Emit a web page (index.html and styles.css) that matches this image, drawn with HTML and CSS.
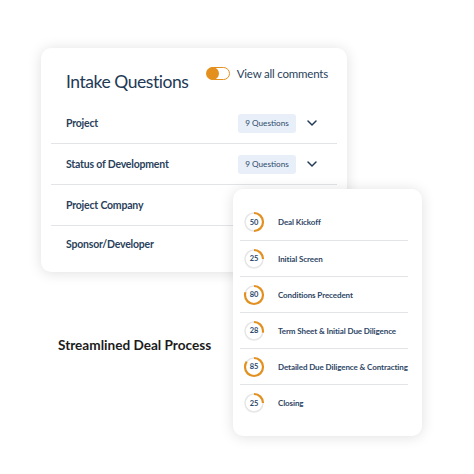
FILE: index.html
```html
<!DOCTYPE html>
<html lang="en">
<head>
<meta charset="utf-8">
<title>Intake Questions</title>
<link rel="stylesheet" href="styles.css">
</head>
<body>
<div class="stage">
  <section class="card intake">
    <header class="intake-head">
      <h1 class="intake-title">Intake Questions</h1>
      <div class="comments-toggle">
        <span class="toggle"><span class="toggle-knob"></span></span>
        <span class="toggle-label">View all comments</span>
      </div>
    </header>
    <ul class="q-list">
      <li class="q-row">
        <span class="q-name">Project</span>
        <span class="q-meta"><span class="badge">9 Questions</span>
          <svg class="chev" width="10" height="6" viewBox="0 0 10 6"><path d="M1 1l4 4 4-4" fill="none" stroke="#243b58" stroke-width="1.5" stroke-linecap="round" stroke-linejoin="round"/></svg></span>
      </li>
      <li class="q-row">
        <span class="q-name">Status of Development</span>
        <span class="q-meta"><span class="badge">9 Questions</span>
          <svg class="chev" width="10" height="6" viewBox="0 0 10 6"><path d="M1 1l4 4 4-4" fill="none" stroke="#243b58" stroke-width="1.5" stroke-linecap="round" stroke-linejoin="round"/></svg></span>
      </li>
      <li class="q-row">
        <span class="q-name">Project Company</span>
      </li>
      <li class="q-row">
        <span class="q-name">Sponsor/Developer</span>
      </li>
    </ul>
  </section>

  <p class="caption">Streamlined Deal Process</p>

  <section class="card deal">
    <ul class="stage-list">
      <li class="stage-row">
        <span class="ring"><svg width="22" height="22" viewBox="0 0 22 22"><circle cx="11" cy="11" r="9" class="ring-track"/><circle cx="11" cy="11" r="9" class="ring-bar" pathLength="100" stroke-dasharray="50 100"/></svg><span class="ring-num">50</span></span>
        <span class="stage-name">Deal Kickoff</span>
      </li>
      <li class="stage-row">
        <span class="ring"><svg width="22" height="22" viewBox="0 0 22 22"><circle cx="11" cy="11" r="9" class="ring-track"/><circle cx="11" cy="11" r="9" class="ring-bar" pathLength="100" stroke-dasharray="25 100"/></svg><span class="ring-num">25</span></span>
        <span class="stage-name">Initial Screen</span>
      </li>
      <li class="stage-row">
        <span class="ring"><svg width="22" height="22" viewBox="0 0 22 22"><circle cx="11" cy="11" r="9" class="ring-track"/><circle cx="11" cy="11" r="9" class="ring-bar" pathLength="100" stroke-dasharray="80 100"/></svg><span class="ring-num">80</span></span>
        <span class="stage-name">Conditions Precedent</span>
      </li>
      <li class="stage-row">
        <span class="ring"><svg width="22" height="22" viewBox="0 0 22 22"><circle cx="11" cy="11" r="9" class="ring-track"/><circle cx="11" cy="11" r="9" class="ring-bar" pathLength="100" stroke-dasharray="28 100"/></svg><span class="ring-num">28</span></span>
        <span class="stage-name">Term Sheet &amp; Initial Due Diligence</span>
      </li>
      <li class="stage-row">
        <span class="ring"><svg width="22" height="22" viewBox="0 0 22 22"><circle cx="11" cy="11" r="9" class="ring-track"/><circle cx="11" cy="11" r="9" class="ring-bar" pathLength="100" stroke-dasharray="85 100"/></svg><span class="ring-num">85</span></span>
        <span class="stage-name">Detailed Due Diligence &amp; Contracting</span>
      </li>
      <li class="stage-row">
        <span class="ring"><svg width="22" height="22" viewBox="0 0 22 22"><circle cx="11" cy="11" r="9" class="ring-track"/><circle cx="11" cy="11" r="9" class="ring-bar" pathLength="100" stroke-dasharray="25 100"/></svg><span class="ring-num">25</span></span>
        <span class="stage-name">Closing</span>
      </li>
    </ul>
  </section>
</div>
</body>
</html>
```

FILE: styles.css
```css
* { box-sizing: border-box; }
html, body { margin: 0; padding: 0; background: #fff; }
body { font-family: "Lato", "Open Sans", sans-serif; color: #243b58; }
ul { list-style: none; margin: 0; padding: 0; }

.stage {
  position: relative;
  width: 474px;
  height: 474px;
  padding: 48px 0 0 41px;
}

.card {
  background: #fff;
  border-radius: 10px;
  box-shadow: 0 1px 14px rgba(0, 0, 0, 0.13);
}

.intake {
  width: 306px;
  height: 224px;
  padding: 0 10px;
}

.intake-head {
  display: flex;
  justify-content: space-between;
  align-items: flex-start;
  height: 55px;
  padding: 19px 9px 0 15px;
}

.intake-title {
  margin: 5px 0 0;
  font-size: 17.5px;
  font-weight: 400;
  letter-spacing: -0.45px;
  line-height: 20px;
  white-space: nowrap;
  color: #223956;
}

.comments-toggle {
  display: flex;
  align-items: center;
  gap: 7px;
  height: 13px;
  flex: none;
}

.toggle {
  display: flex;
  width: 23px;
  height: 13px;
  border: 1.5px solid #e3901f;
  border-radius: 7px;
  position: relative;
}

.toggle-knob {
  position: absolute;
  left: -1.5px;
  top: -1.5px;
  width: 13px;
  height: 13px;
  border-radius: 50%;
  background: #e3901f;
}

.toggle-label {
  font-size: 11.5px;
  letter-spacing: -0.2px;
  line-height: 13px;
  white-space: nowrap;
  color: #2a3f5b;
}

.q-row {
  display: flex;
  align-items: center;
  justify-content: space-between;
  height: 41px;
  padding: 0 20px 0 15px;
  border-bottom: 1px solid #e2e4e8;
}
.q-row:last-child { border-bottom: none; height: 35px; }

.q-name {
  font-size: 10.5px;
  font-weight: 700;
  letter-spacing: -0.2px;
  white-space: nowrap;
  color: #2a3f5b;
}

.q-meta {
  display: flex;
  align-items: center;
  gap: 11px;
}

.badge {
  display: flex;
  align-items: center;
  justify-content: center;
  width: 58px;
  height: 19px;
  border-radius: 3px;
  background: #e8eff8;
  font-size: 8.2px;
  white-space: nowrap;
  color: #2d4a6b;
}

.chev { display: block; }

.caption {
  margin: 64px 0 0 17px;
  font-size: 13.6px;
  font-weight: 700;
  color: #1c1c1c;
  line-height: 18px;
  white-space: nowrap;
}

.deal {
  position: absolute;
  left: 233px;
  top: 189px;
  width: 189px;
  height: 247px;
  padding: 15px 14px 14px 7px;
}

.stage-row {
  display: flex;
  align-items: center;
  gap: 13px;
  height: 36px;
  padding-left: 3px;
  border-bottom: 1px solid #e2e4e8;
}
.stage-row:first-child { height: 37px; }
.stage-row:last-child { border-bottom: none; }

.ring {
  position: relative;
  width: 22px;
  height: 22px;
  flex: none;
}
.ring svg { display: block; transform: rotate(-90deg); }
.ring-track { fill: none; stroke: #e6e6e6; stroke-width: 1.5; }
.ring-bar { fill: none; stroke: #e3901f; stroke-width: 2.2; }

.ring-num {
  position: absolute;
  inset: 0;
  display: flex;
  align-items: center;
  justify-content: center;
  font-size: 7.5px;
  font-weight: 700;
  color: #2d4a6b;
}

.stage-name {
  font-size: 8px;
  font-weight: 700;
  letter-spacing: -0.1px;
  color: #2e4665;
  white-space: nowrap;
}
```
